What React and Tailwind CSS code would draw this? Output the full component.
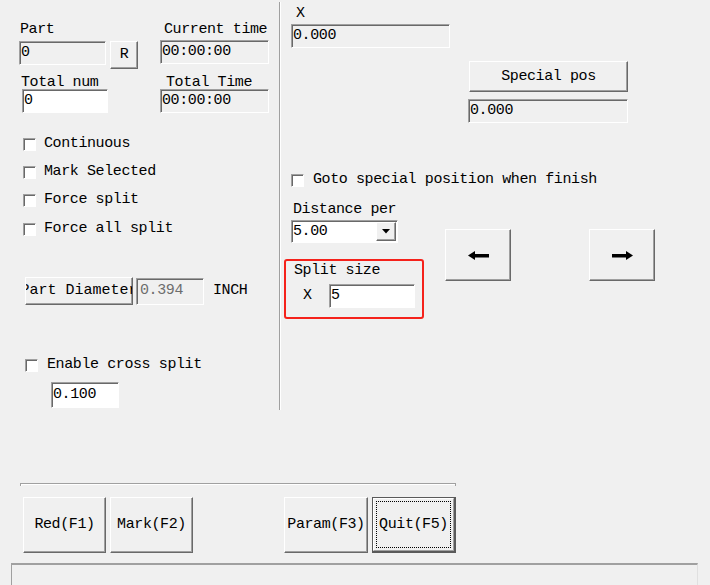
const sunken = "border border-t-[#a0a0a0] border-l-[#a0a0a0] border-b-white border-r-white shadow-[inset_1px_1px_0_#696969]";
const raised = "border border-t-white border-l-white border-b-[#696969] border-r-[#696969] shadow-[inset_-1px_-1px_0_#a0a0a0] bg-[#f0f0f0]";

function Field({ className, white, gray, children }) {
  return (
    <div className={`${sunken} ${white ? "bg-white" : "bg-[#f0f0f0]"} ${gray ? "text-[#6d6d6d]" : ""} flex items-center pl-[1px] shrink-0 ${className}`}>
      {children}
    </div>
  );
}

function Btn({ className, children }) {
  return (
    <div className={`${raised} flex items-center justify-center overflow-hidden whitespace-nowrap shrink-0 ${className}`}>
      {children}
    </div>
  );
}

function Check({ label, className, gap }) {
  return (
    <div className={`flex items-center h-[16px] ${className}`}>
      <div className={`${sunken} bg-white w-[13px] h-[13px] shrink-0`} />
      <span className={gap}>{label}</span>
    </div>
  );
}

function Arrow({ right }) {
  return (
    <svg width="21" height="9" viewBox="0 0 21 9" className={right ? "scale-x-[-1]" : ""}>
      <polygon points="0,4.5 7,0 7,9" fill="#000" />
      <rect x="6" y="3" width="15" height="3.5" fill="#000" />
    </svg>
  );
}

export default function App() {
  return (
    <div className="w-[710px] h-[585px] bg-[#f0f0f0] overflow-hidden text-black text-[15px] leading-[16px] tracking-[-0.4px] font-[family-name:Liberation_Mono,monospace]">
      <div className="flex h-[411px]">
        {/* left panel */}
        <div className="w-[279px] shrink-0">
          <div className="flex mt-[22px] h-[16px]">
            <span className="ml-[20px] w-[144px]">Part</span>
            <span>Current time</span>
          </div>
          <div className="flex items-start mt-[2px]">
            <Field className="ml-[19px] mt-[1px] w-[87px] h-[24px]">0</Field>
            <Btn className="ml-[4px] mt-[1px] w-[28px] h-[28px]">R</Btn>
            <Field className="ml-[22px] w-[109px] h-[24px]">00:00:00</Field>
          </div>
          <div className="flex mt-[6px] h-[14px]">
            <span className="ml-[21px] w-[145px]">Total num</span>
            <span>Total Time</span>
          </div>
          <div className="flex items-start">
            <Field white className="ml-[22px] w-[86px] h-[24px]">0</Field>
            <Field className="ml-[52px] w-[109px] h-[24px]">00:00:00</Field>
          </div>

          <Check label="Continuous" className="ml-[23px] mt-[23px]" gap="ml-[8px]" />
          <Check label="Mark Selected" className="ml-[23px] mt-[12px]" gap="ml-[8px]" />
          <Check label="Force split" className="ml-[23px] mt-[12px]" gap="ml-[8px]" />
          <Check label="Force all split" className="ml-[23px] mt-[13px]" gap="ml-[8px]" />

          <div className="flex items-center mt-[40px]">
            <Btn className="ml-[25px] w-[108px] h-[28px]">
              <span className="tracking-[0px]">Part Diameter</span>
            </Btn>
            <Field gray className="ml-[3px] w-[68px] h-[27px] !items-start pt-[4px] pl-[3px]">0.394</Field>
            <span className="ml-[9px]">INCH</span>
          </div>

          <Check label="Enable cross split" className="ml-[25px] mt-[52px]" gap="ml-[9px]" />
          <Field white className="ml-[51px] mt-[9px] w-[68px] h-[26px]">0.100</Field>
        </div>

        {/* divider */}
        <div className="w-[2px] h-[408px] mt-[2px] border-l border-l-[#a0a0a0] border-r border-r-white shrink-0" />

        {/* right panel */}
        <div className="flex-1">
          <div className="mt-[6px] h-[15px] ml-[15px]">X</div>
          <Field className="ml-[10px] mt-[3px] w-[159px] h-[24px]">0.000</Field>
          <Btn className="ml-[188px] mt-[13px] w-[159px] h-[31px]">Special pos</Btn>
          <Field className="ml-[187px] mt-[7px] w-[160px] h-[24px]">0.000</Field>

          <Check label="Goto special position when finish" className="ml-[10px] mt-[49px]" gap="ml-[9px]" />
          <div className="ml-[12px] mt-[14px] h-[15px]">Distance per</div>

          <div className="flex items-start mt-[3px]">
            <div className="w-[164px] shrink-0">
              <div className={`${sunken} bg-white ml-[10px] w-[107px] h-[23px] flex items-center justify-between`}>
                <span className="pl-[1px]">5.00</span>
                <div className={`${raised} w-[20px] h-[19px] mr-[1px] flex items-center justify-center`}>
                  <svg width="8" height="5" viewBox="0 0 8 5">
                    <polygon points="0,0 8,0 4,4.5" fill="#000" />
                  </svg>
                </div>
              </div>
              <div className="ml-[3px] mt-[16px] w-[140px] h-[60px] border-2 border-[#f5221b] rounded-[3px]">
                <div className="ml-[8px] mt-[2px] h-[16px]">Split size</div>
                <div className="flex items-center mt-[5px]">
                  <span className="ml-[17px] w-[26px]">X</span>
                  <Field white className="w-[86px] h-[24px]">5</Field>
                </div>
              </div>
            </div>
            <Btn className="mt-[9px] w-[66px] h-[52px]">
              <Arrow />
            </Btn>
            <Btn className="ml-[78px] mt-[9px] w-[66px] h-[52px]">
              <Arrow right />
            </Btn>
          </div>
        </div>
      </div>

      {/* bottom */}
      <div className="ml-[20px] mt-[72px] w-[436px] h-[3px] border-t border-t-[#a0a0a0] border-l border-l-[#a0a0a0] border-r border-r-[#a0a0a0] shadow-[inset_1px_1px_0_#ffffff]" />
      <div className="flex mt-[11px]">
        <Btn className="ml-[23px] w-[83px] h-[56px]">Red(F1)</Btn>
        <Btn className="ml-[4px] w-[83px] h-[56px]">Mark(F2)</Btn>
        <Btn className="ml-[91px] w-[84px] h-[56px]">Param(F3)</Btn>
        <div className="ml-[4px] w-[84px] h-[56px] border border-[#5a5a5a] border-b-2 border-r-2 shrink-0">
          <div className="w-full h-full border border-t-white border-l-white border-b-[#a0a0a0] border-r-[#a0a0a0] bg-[#f0f0f0] p-[2px]">
            <div className="w-full h-full border border-dotted border-black flex items-center justify-center whitespace-nowrap overflow-visible">
              Quit(F5)
            </div>
          </div>
        </div>
      </div>
      <div className="ml-[11px] mt-[10px] w-[687px] h-[30px] border-t-2 border-t-[#a0a0a0] border-l border-l-[#a0a0a0] border-r border-r-[#e0e0e0]" />
    </div>
  );
}
